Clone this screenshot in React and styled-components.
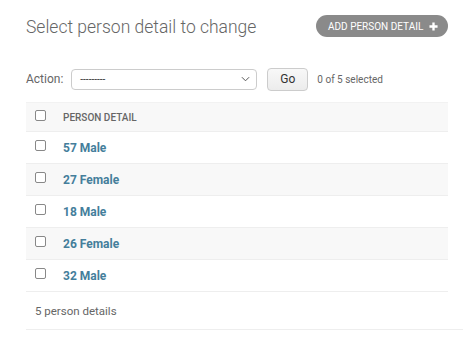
import React from "react";
import styled, { createGlobalStyle } from "styled-components";

const Global = createGlobalStyle`
  html, body { margin: 0; padding: 0; background: #fff; }
  body { font-family: Roboto, "Liberation Sans", Arial, sans-serif; color: #333; }
  * { box-sizing: border-box; }
`;

const Page = styled.div`
  width: 474px;
  padding: 15px 26px 0 26px;
`;

const TitleBar = styled.div`
  display: flex;
  align-items: center;
  justify-content: space-between;
  height: 22px;
`;

const Title = styled.h1`
  margin: 0;
  font-size: 17.5px;
  font-weight: 300;
  color: #666;
  line-height: 24px;
  position: relative;
  top: 1px;
`;

const AddButton = styled.a`
  display: flex;
  align-items: center;
  gap: 6px;
  height: 22px;
  width: 132px;
  padding: 0 0 0 12px;
  border-radius: 11px;
  background: #8a8a8a;
  color: #fff;
  font-size: 10px;
  font-weight: 400;
  text-transform: uppercase;
  white-space: nowrap;
`;

const ActionBar = styled.div`
  display: flex;
  align-items: center;
  margin-top: 31px;
  height: 22px;
  font-size: 12px;
  color: #666;
`;

const Label = styled.span`
  margin-right: 8px;
`;

const Select = styled.div`
  width: 186px;
  height: 21px;
  border: 1px solid #ccc;
  border-radius: 4px;
  display: flex;
  align-items: center;
  justify-content: space-between;
  padding: 0 6px 0 8px;
  color: #333;
  font-size: 10px;
  background: #fff;
`;

const GoButton = styled.button`
  margin-left: 10px;
  width: 41px;
  height: 23px;
  border: 1px solid #ccc;
  border-radius: 4px;
  background: linear-gradient(#f8f8f8, #ececec);
  color: #333;
  font-family: inherit;
  font-size: 12px;
  padding: 0;
`;

const Counter = styled.span`
  margin-left: 9px;
  font-size: 10px;
  color: #666;
`;

const Table = styled.div`
  margin-top: 12px;
  border-top: 1px solid #f2f2f2;
`;

const Row = styled.div`
  display: flex;
  align-items: center;
  height: ${(p) => (p.$header ? "29px" : "32px")};
  background: ${(p) => (p.$shaded ? "#f8f8f8" : "#fff")};
  border-bottom: 1px solid #eee;
  padding-left: 9px;
`;

const Check = styled.span`
  width: 11px;
  height: 11px;
  border: 1px solid #888;
  border-radius: 2px;
  background: #fff;
  flex: none;
  position: relative;
  top: -2px;
`;

const HeaderText = styled.span`
  margin-left: 17px;
  font-size: 10px;
  font-weight: 500;
  color: #666;
  text-transform: uppercase;
`;

const Link = styled.a`
  margin-left: 17px;
  font-size: 12px;
  font-weight: 700;
  color: #447e9b;
  text-decoration: none;
`;

const Footer = styled.div`
  height: 38px;
  display: flex;
  align-items: center;
  padding-left: 9px;
  font-size: 11.5px;
  color: #666;
  border-bottom: 1px solid #eee;
  margin-right: -15px;
`;

const rows = ["57 Male", "27 Female", "18 Male", "26 Female", "32 Male"];

export default function App() {
  return (
    <Page>
      <Global />
      <TitleBar>
        <Title>Select person detail to change</Title>
        <AddButton>
          ADD PERSON DETAIL
          <svg width="9" height="9" viewBox="0 0 10 10">
            <path d="M5 0.5v9M0.5 5h9" stroke="#fff" strokeWidth="2.6" />
          </svg>
        </AddButton>
      </TitleBar>
      <ActionBar>
        <Label>Action:</Label>
        <Select>
          <span>---------</span>
          <svg width="9" height="6" viewBox="0 0 10 6">
            <path d="M1 1l4 4 4-4" fill="none" stroke="#555" strokeWidth="1.1" />
          </svg>
        </Select>
        <GoButton>Go</GoButton>
        <Counter>0 of 5 selected</Counter>
      </ActionBar>
      <Table>
        <Row $header $shaded>
          <Check />
          <HeaderText>Person detail</HeaderText>
        </Row>
        {rows.map((r, i) => (
          <Row key={r} $shaded={i % 2 === 1}>
            <Check />
            <Link>{r}</Link>
          </Row>
        ))}
        <Footer>5 person details</Footer>
      </Table>
    </Page>
  );
}
